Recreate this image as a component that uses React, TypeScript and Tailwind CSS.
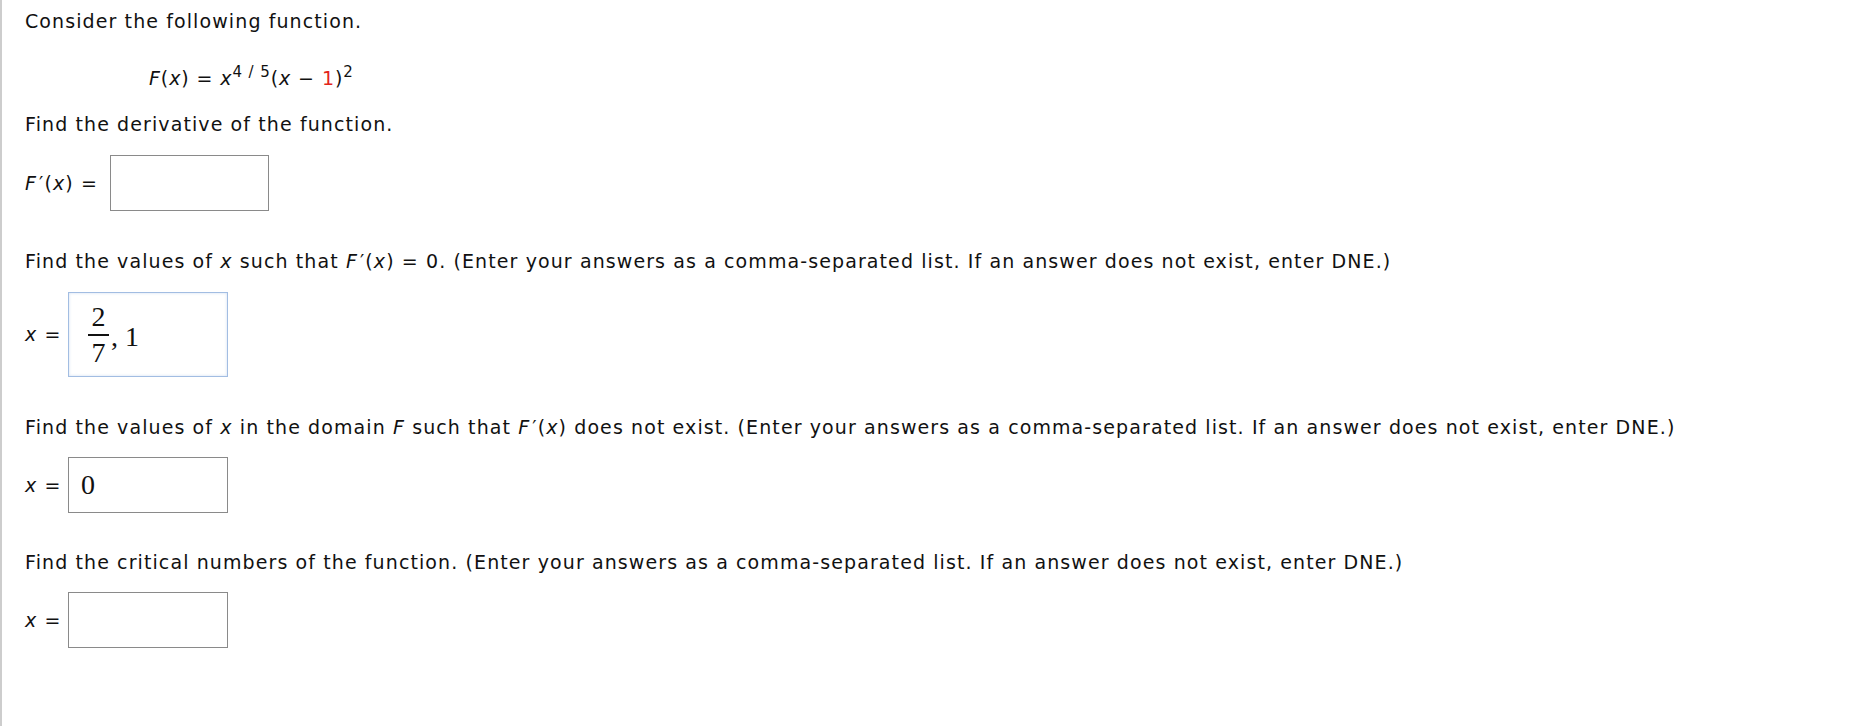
import type { ReactNode } from "react";

function AnswerRow({
  label,
  labelClass,
  boxClass,
  children,
}: {
  label: ReactNode;
  labelClass: string;
  boxClass: string;
  children?: ReactNode;
}) {
  return (
    <div className="flex items-center">
      <span className={labelClass}>{label}</span>
      <div className={boxClass}>{children}</div>
    </div>
  );
}

export default function App() {
  return (
    <div className="min-h-[726px] w-full bg-white">
      <div className='min-h-[726px] border-l-2 border-[#cdcdcd] pl-[23px] pt-2 font-["DejaVu_Sans","Liberation_Sans",sans-serif] text-[19px] leading-[27px] tracking-[1.1px] text-[#111]'>
        <p>Consider the following function.</p>

        <p className="mt-[30px] pl-[124px] tracking-[0.9px]">
          <i>F</i>(<i>x</i>) = <i>x</i>
          <sup className="-top-2 text-[15px]">4 / 5</sup>(<i>x</i> −{" "}
          <span className="text-[#e3241b]">1</span>)
          <sup className="-top-2 text-[15px]">2</sup>
        </p>

        <p className="mt-[19px]">Find the derivative of the function.</p>

        <div className="mt-[17px]">
          <AnswerRow
            label={
              <>
                <i>F</i>
                <span className="ml-[2px]">′</span>(<i>x</i>) =
              </>
            }
            labelClass="w-[85px] whitespace-nowrap"
            boxClass="h-[56px] w-[159px] border border-[#8a8a8a] bg-white"
          />
        </div>

        <p className="mt-[37px]">
          Find the values of <i>x</i> such that <i>F</i>
          <span className="ml-[2px]">′</span>(<i>x</i>) = 0. (Enter your
          answers as a comma-separated list. If an answer does not exist, enter
          DNE.)
        </p>

        <div className="mt-[17px]">
          <AnswerRow
            label={
              <>
                <i>x</i> =
              </>
            }
            labelClass="w-[43px] whitespace-nowrap"
            boxClass="flex h-[85px] w-[160px] items-center border border-[#a2bde2] bg-white pl-[19px] shadow-[inset_0_0_3px_rgba(120,160,215,0.35)]"
          >
            <div className='flex items-center font-["Liberation_Serif","DejaVu_Serif",serif] text-[28px] leading-none tracking-normal text-[#111]'>
              <div className="flex flex-col items-center">
                <span className="px-[2px]">2</span>
                <span className="my-[3px] h-[2px] w-[21px] bg-[#111]" />
                <span className="px-[2px]">7</span>
              </div>
              <span className="ml-[2px] mt-[4px]">, 1</span>
            </div>
          </AnswerRow>
        </div>

        <p className="mt-[37px]">
          Find the values of <i>x</i> in the domain <i>F</i> such that{" "}
          <i>F</i>
          <span className="ml-[2px]">′</span>(<i>x</i>) does not exist. (Enter
          your answers as a comma-separated list. If an answer does not exist,
          enter DNE.)
        </p>

        <div className="mt-[16px]">
          <AnswerRow
            label={
              <>
                <i>x</i> =
              </>
            }
            labelClass="w-[43px] whitespace-nowrap"
            boxClass='flex h-[56px] w-[160px] items-center border border-[#8a8a8a] bg-white pl-[12px] font-["Liberation_Serif","DejaVu_Serif",serif] text-[28px] leading-none tracking-normal'
          >
            0
          </AnswerRow>
        </div>

        <p className="mt-[36px]">
          Find the critical numbers of the function. (Enter your answers as a
          comma-separated list. If an answer does not exist, enter DNE.)
        </p>

        <div className="mt-[16px]">
          <AnswerRow
            label={
              <>
                <i>x</i> =
              </>
            }
            labelClass="w-[43px] whitespace-nowrap"
            boxClass="h-[56px] w-[160px] border border-[#8a8a8a] bg-white"
          />
        </div>
      </div>
    </div>
  );
}
